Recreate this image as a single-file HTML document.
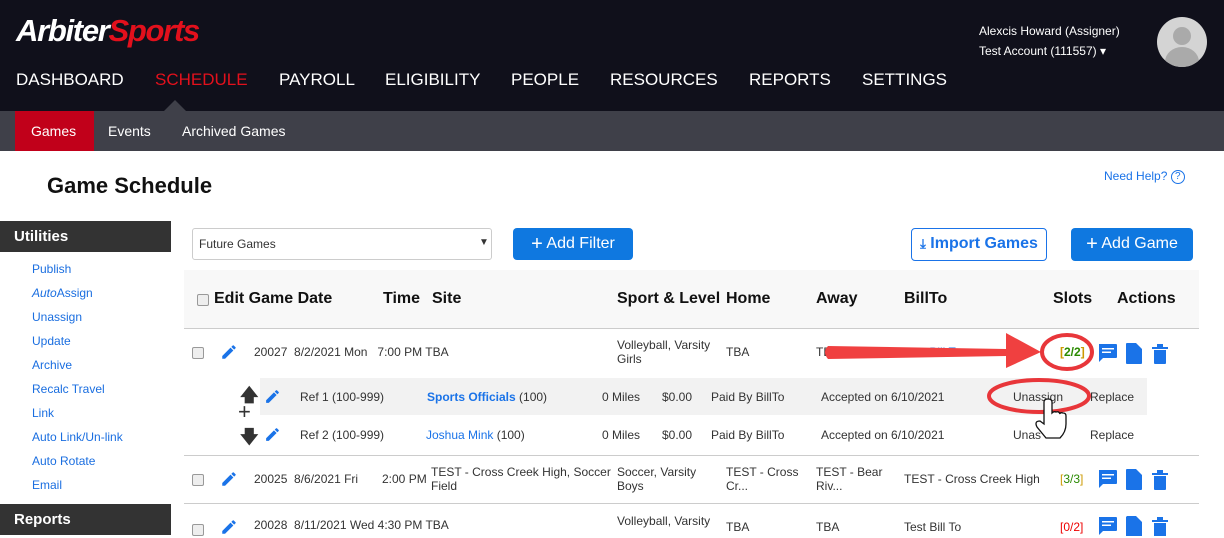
<!DOCTYPE html>
<html><head><meta charset="utf-8"><style>
*{margin:0;padding:0;box-sizing:border-box}
body{width:1224px;height:530px;overflow:hidden;background:#fff;font-family:"Liberation Sans",Arial,sans-serif;position:relative;color:#222}
.a{position:absolute;white-space:nowrap}
.hdr{position:absolute;left:0;top:0;width:1224px;height:111px;background:#10101b}
.sub{position:absolute;left:0;top:111px;width:1224px;height:40px;background:#3f4049}
.nav{top:70px;font-size:17px;color:#fff}
.blue{color:#1a73e8}
.side{font-size:12px;color:#1a6ee0;left:32px}
.th{font-size:16px;font-weight:bold;color:#111;top:290px}
.td{font-size:12px;color:#333}
.line{position:absolute;left:184px;width:1015px;height:1px;background:#ccc}
.cb{position:absolute;width:12px;height:12px;border:1px solid #999;border-radius:2px;background:#eee}
</style></head><body>
<div class="hdr"></div>
<div class="a" style="left:16px;top:13px;font-size:31px;font-weight:bold;font-style:italic;letter-spacing:-1.3px;color:#fff">Arbiter<span style="color:#e3101c">Sports</span></div>
<div class="a nav" style="left:16px">DASHBOARD</div>
<div class="a nav" style="left:155px;color:#e3101c">SCHEDULE</div>
<div class="a nav" style="left:279px">PAYROLL</div>
<div class="a nav" style="left:385px">ELIGIBILITY</div>
<div class="a nav" style="left:511px">PEOPLE</div>
<div class="a nav" style="left:610px">RESOURCES</div>
<div class="a nav" style="left:749px">REPORTS</div>
<div class="a nav" style="left:862px">SETTINGS</div>
<div class="a" style="left:979px;top:24px;font-size:12px;color:#fff">Alexcis Howard (Assigner)</div>
<div class="a" style="left:979px;top:44px;font-size:12px;color:#fff">Test Account (111557) ▾</div>
<div class="a" style="left:1157px;top:17px;width:50px;height:50px;border-radius:50%;background:#d4d4d4;overflow:hidden">
<div style="position:absolute;left:16px;top:10px;width:18px;height:18px;border-radius:50%;background:#aaa"></div>
<div style="position:absolute;left:8px;top:30px;width:34px;height:30px;border-radius:50% 50% 0 0;background:#aaa"></div></div>
<div class="sub"></div>
<div class="a" style="left:164px;top:100px;width:0;height:0;border-left:11px solid transparent;border-right:11px solid transparent;border-bottom:11px solid #3f4049"></div>
<div class="a" style="left:15px;top:111px;width:79px;height:40px;background:#c1001a"></div>
<div class="a" style="left:31px;top:123px;font-size:14px;color:#fff">Games</div>
<div class="a" style="left:108px;top:123px;font-size:14px;color:#fff">Events</div>
<div class="a" style="left:182px;top:123px;font-size:14px;color:#fff">Archived Games</div>

<div class="a" style="left:47px;top:173px;font-size:22px;font-weight:bold;color:#111">Game Schedule</div>
<div class="a" style="left:1104px;top:169px;font-size:12px;color:#1a73e8">Need Help? <span style="display:inline-block;width:14px;height:14px;border:1.5px solid #1a73e8;border-radius:50%;font-size:10px;text-align:center;line-height:11px;vertical-align:middle">?</span></div>

<div class="a" style="left:0;top:221px;width:171px;height:31px;background:#333"></div>
<div class="a" style="left:14px;top:228px;font-size:15px;font-weight:bold;color:#fff">Utilities</div>
<div class="a side" style="top:262px">Publish</div>
<div class="a side" style="top:286px"><i>Auto</i>Assign</div>
<div class="a side" style="top:310px">Unassign</div>
<div class="a side" style="top:334px">Update</div>
<div class="a side" style="top:358px">Archive</div>
<div class="a side" style="top:382px">Recalc Travel</div>
<div class="a side" style="top:406px">Link</div>
<div class="a side" style="top:430px">Auto Link/Un-link</div>
<div class="a side" style="top:454px">Auto Rotate</div>
<div class="a side" style="top:478px">Email</div>
<div class="a" style="left:0;top:504px;width:171px;height:31px;background:#333"></div>
<div class="a" style="left:14px;top:511px;font-size:15px;font-weight:bold;color:#fff">Reports</div>

<div class="a" style="left:192px;top:228px;width:300px;height:32px;border:1px solid #ccc;border-radius:3px"></div>
<div class="a" style="left:199px;top:237px;font-size:12px;color:#333">Future Games</div>
<div class="a" style="left:479px;top:237px;font-size:10px;color:#333">▼</div>
<div class="a" style="left:513px;top:228px;width:120px;height:32px;background:#0f78e0;border-radius:4px;color:#fff;font-size:16px;text-align:center;line-height:32px"><span style="font-size:20px;vertical-align:-2px">+</span> Add Filter</div>
<div class="a" style="left:911px;top:228px;width:136px;height:33px;border:1px solid #1a73e8;border-radius:4px;color:#1a73e8;font-size:16px;font-weight:bold;text-align:center;line-height:30px"><span style="font-size:13px">⤓</span> Import Games</div>
<div class="a" style="left:1071px;top:228px;width:122px;height:33px;background:#0f78e0;border-radius:4px;color:#fff;font-size:16px;text-align:center;line-height:32px"><span style="font-size:20px;vertical-align:-2px">+</span> Add Game</div>

<div class="a" style="left:184px;top:270px;width:1015px;height:58px;background:#f8f8f8"></div>
<div class="cb" style="left:197px;top:294px"></div>
<div class="a th" style="left:214px">Edit Game Date</div>
<div class="a th" style="left:383px">Time</div>
<div class="a th" style="left:432px">Site</div>
<div class="a th" style="left:617px">Sport &amp; Level</div>
<div class="a th" style="left:726px">Home</div>
<div class="a th" style="left:816px">Away</div>
<div class="a th" style="left:904px">BillTo</div>
<div class="a th" style="left:1053px">Slots</div>
<div class="a th" style="left:1117px">Actions</div>
<div class="line" style="top:328px"></div>

<!-- row 1 -->
<div class="cb" style="left:192px;top:347px"></div>
<svg class="a" style="left:220px;top:343px" width="18" height="18" viewBox="0 0 24 24"><path fill="#1a73e8" d="M3 17.25V21h3.75L17.8 9.94l-3.75-3.75L3 17.25zM20.7 7.04a1 1 0 000-1.41l-2.34-2.34a1 1 0 00-1.41 0l-1.83 1.83 3.75 3.75 1.83-1.83z"/></svg>
<div class="a td" style="left:254px;top:345px">20027&nbsp;&nbsp;8/2/2021 Mon&nbsp;&nbsp;&nbsp;7:00 PM TBA</div>
<div class="a td" style="left:617px;top:338px;line-height:14px">Volleyball, Varsity<br>Girls</div>
<div class="a td" style="left:726px;top:345px">TBA</div>
<div class="a td" style="left:816px;top:345px">TBA</div>
<div class="a td" style="left:904px;top:345px;color:#1a73e8">Test Bill To</div>
<div class="a" style="left:260px;top:378px;width:887px;height:37px;background:#f2f2f2"></div>
<div class="a" style="left:240px;top:383px;font-size:18px;font-weight:bold;color:#333">🡅</div>
<div class="a" style="left:238px;top:401px;font-size:22px;color:#333;line-height:22px">+</div>
<div class="a" style="left:240px;top:425px;font-size:18px;font-weight:bold;color:#333">🡇</div>
<svg class="a" style="left:264px;top:388px" width="17" height="17" viewBox="0 0 24 24"><path fill="#1a73e8" d="M3 17.25V21h3.75L17.8 9.94l-3.75-3.75L3 17.25zM20.7 7.04a1 1 0 000-1.41l-2.34-2.34a1 1 0 00-1.41 0l-1.83 1.83 3.75 3.750 1.83-1.83z"/></svg>
<svg class="a" style="left:264px;top:426px" width="17" height="17" viewBox="0 0 24 24"><path fill="#1a73e8" d="M3 17.25V21h3.75L17.8 9.94l-3.75-3.75L3 17.25zM20.7 7.04a1 1 0 000-1.41l-2.34-2.34a1 1 0 00-1.41 0l-1.83 1.83 3.75 3.75 1.83-1.83z"/></svg>
<div class="a td" style="left:300px;top:390px">Ref 1 (100-999)</div>
<div class="a td" style="left:427px;top:390px"><b style="color:#1a73e8">Sports Officials</b> (100)</div>
<div class="a td" style="left:602px;top:390px">0 Miles</div>
<div class="a td" style="left:662px;top:390px">$0.00</div>
<div class="a td" style="left:711px;top:390px">Paid By BillTo</div>
<div class="a td" style="left:821px;top:390px">Accepted on 6/10/2021</div>
<div class="a td blue" style="left:1013px;top:390px">Unassign</div>
<div class="a td blue" style="left:1090px;top:390px">Replace</div>
<div class="a td" style="left:300px;top:428px">Ref 2 (100-999)</div>
<div class="a td" style="left:426px;top:428px"><span style="color:#1a73e8">Joshua Mink</span> (100)</div>
<div class="a td" style="left:602px;top:428px">0 Miles</div>
<div class="a td" style="left:662px;top:428px">$0.00</div>
<div class="a td" style="left:711px;top:428px">Paid By BillTo</div>
<div class="a td" style="left:821px;top:428px">Accepted on 6/10/2021</div>
<div class="a td blue" style="left:1013px;top:428px">Unas</div>
<div class="a td blue" style="left:1090px;top:428px">Replace</div>
<div class="line" style="top:455px"></div>

<!-- row 2 -->
<div class="cb" style="left:192px;top:474px"></div>
<svg class="a" style="left:220px;top:470px" width="18" height="18" viewBox="0 0 24 24"><path fill="#1a73e8" d="M3 17.25V21h3.75L17.8 9.94l-3.75-3.75L3 17.25zM20.7 7.04a1 1 0 000-1.41l-2.34-2.34a1 1 0 00-1.41 0l-1.83 1.83 3.75 3.75 1.83-1.83z"/></svg>
<div class="a td" style="left:254px;top:472px">20025&nbsp;&nbsp;8/6/2021 Fri</div>
<div class="a td" style="left:382px;top:472px">2:00 PM</div>
<div class="a td blue" style="left:431px;top:465px;line-height:14px">TEST - Cross Creek High, Soccer<br>Field</div>
<div class="a td" style="left:617px;top:465px;line-height:14px">Soccer, Varsity<br>Boys</div>
<div class="a td blue" style="left:726px;top:465px;line-height:14px">TEST - Cross<br>Cr...</div>
<div class="a td blue" style="left:816px;top:465px;line-height:14px">TEST - Bear<br>Riv...</div>
<div class="a td blue" style="left:904px;top:472px">TEST - Cross Creek High</div>
<div class="a td" style="left:1060px;top:472px;color:#2a8a00"><span style="color:#c90">[</span>3/3<span style="color:#c90">]</span></div>
<div class="line" style="top:503px"></div>
<!-- row 3 -->
<div class="cb" style="left:192px;top:524px"></div>
<svg class="a" style="left:220px;top:518px" width="18" height="18" viewBox="0 0 24 24"><path fill="#1a73e8" d="M3 17.25V21h3.75L17.8 9.94l-3.75-3.75L3 17.25zM20.7 7.04a1 1 0 000-1.41l-2.34-2.34a1 1 0 00-1.41 0l-1.83 1.83 3.75 3.75 1.83-1.83z"/></svg>
<div class="a td" style="left:254px;top:518px">20028&nbsp;&nbsp;8/11/2021 Wed&nbsp;4:30 PM TBA</div>
<div class="a td" style="left:617px;top:514px">Volleyball, Varsity</div>
<div class="a td" style="left:726px;top:520px">TBA</div>
<div class="a td" style="left:816px;top:520px">TBA</div>
<div class="a td blue" style="left:904px;top:520px">Test Bill To</div>
<div class="a td" style="left:1060px;top:520px;color:#e00">[0/2]</div>

<!-- action icons -->
<svg class="a" style="left:1097px;top:341px" width="80" height="24" viewBox="0 0 80 24"><path fill="#1a73e8" d="M2 3h17a1 1 0 011 1v12a1 1 0 01-1 1H6l-4 4z"/><path fill="#fff" d="M5 7h12v1.5H5zM5 10.5h9V12H5z"/><path fill="#1a73e8" d="M30 2h9l6 6v14a1 1 0 01-1 1H30a1 1 0 01-1-1V3a1 1 0 011-1z"/><path fill="#1a73e8" d="M55 6h16v2H55zM60 3h6v3h-6zM57 9h12v13a1 1 0 01-1 1H58a1 1 0 01-1-1z"/></svg>
<svg class="a" style="left:1097px;top:467px" width="80" height="24" viewBox="0 0 80 24"><path fill="#1a73e8" d="M2 3h17a1 1 0 011 1v12a1 1 0 01-1 1H6l-4 4z"/><path fill="#fff" d="M5 7h12v1.5H5zM5 10.5h9V12H5z"/><path fill="#1a73e8" d="M30 2h9l6 6v14a1 1 0 01-1 1H30a1 1 0 01-1-1V3a1 1 0 011-1z"/><path fill="#1a73e8" d="M55 6h16v2H55zM60 3h6v3h-6zM57 9h12v13a1 1 0 01-1 1H58a1 1 0 01-1-1z"/></svg>
<svg class="a" style="left:1097px;top:514px" width="80" height="24" viewBox="0 0 80 24"><path fill="#1a73e8" d="M2 3h17a1 1 0 011 1v12a1 1 0 01-1 1H6l-4 4z"/><path fill="#fff" d="M5 7h12v1.5H5zM5 10.5h9V12H5z"/><path fill="#1a73e8" d="M30 2h9l6 6v14H29V3z"/><path fill="#1a73e8" d="M55 6h16v2H55zM60 3h6v3h-6zM57 9h12v13H57z"/></svg>

<!-- annotations -->
<div class="a td" style="left:1060px;top:345px;color:#2a8a00;font-weight:bold"><span style="color:#c90">[</span>2/2<span style="color:#c90">]</span></div>
<svg class="a" style="left:0;top:0" width="1224" height="530">
<path d="M828 346 L1006 349 L1006 333 L1041 352 L1006 368 L1006 356 L828 359 Q822 352 828 346Z" fill="#f04040"/>
<ellipse cx="1067" cy="352" rx="25" ry="17" fill="none" stroke="#e8363a" stroke-width="4"/>
<ellipse cx="1039" cy="396" rx="50" ry="16" fill="none" stroke="#e8363a" stroke-width="4"/>
<path d="M1044 402 v22 l-4 -3 q-6 0 -3 6 l9 11 h14 q6-6 6-14 v-8 q0-3-3-3 q-3-1-3 1 q-1-3-4-2 q-2-1-4 1 v-11 q0-3-4-3 q-4 0-4 3z" fill="#fff" stroke="#111" stroke-width="1.3"/>
</svg>
</body></html>
